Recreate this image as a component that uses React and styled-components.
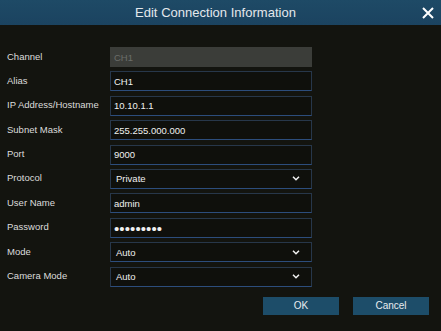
import React from "react";
import styled, { createGlobalStyle } from "styled-components";

const Global = createGlobalStyle`
  html, body { margin: 0; padding: 0; background: #13140f; }
  body { font-family: "Liberation Sans", Arial, sans-serif; }
  * { box-sizing: border-box; }
`;

const Dialog = styled.div`
  width: 441px;
  height: 331px;
  background: #13140f;
  display: flex;
  flex-direction: column;
  overflow: hidden;
`;

const Header = styled.div`
  height: 25px;
  flex: none;
  background: linear-gradient(#1e4a66, #1b4360);
  display: flex;
  align-items: center;
  justify-content: center;
  position: relative;
  padding-right: 10px;
`;

const Title = styled.div`
  color: #e4e8ec;
  font-size: 13px;
  letter-spacing: 0.02px;
`;

const Close = styled.button`
  position: absolute;
  right: 6px;
  top: 6px;
  width: 14px;
  height: 14px;
  padding: 0;
  border: 0;
  background: none;
  display: flex;
  align-items: center;
  justify-content: center;
`;

const Body = styled.div`
  padding: 22px 12px 0 7px;
  display: flex;
  flex-direction: column;
`;

const Form = styled.div`
  display: grid;
  grid-template-columns: 103px 202px;
  row-gap: 4.4px;
`;

const Label = styled.div`
  color: #dcdcdc;
  font-size: 9.5px;
  height: 20px;
  display: flex;
  align-items: center;
  padding-bottom: 2px;
`;

const Field = styled.div`
  height: 20px;
  display: flex;
  align-items: center;
  justify-content: space-between;
  padding: ${(p) => (p.$select ? "0 11px 0 5px" : "0 3px")};
  font-size: 9.5px;
  color: ${(p) => (p.$disabled ? "#6b6d69" : "#f0f0f0")};
  background: ${(p) => (p.$disabled ? "#3b3d39" : "#0f100c")};
  border: 1px solid ${(p) => (p.$disabled ? "#3b3d39" : "#27374a")};
  border-bottom-color: ${(p) => (p.$disabled ? "#3b3d39" : "#2c4d7c")};
`;

const Dots = styled.span`
  font-size: 15px;
  letter-spacing: 0.1px;
  line-height: 1;
  margin-top: 1px;
`;

const Buttons = styled.div`
  display: flex;
  justify-content: flex-end;
  gap: 14px;
  margin-top: 10px;
`;

const Button = styled.button`
  width: 76px;
  height: 18px;
  border: 0;
  padding: 0;
  background: #1d4d69;
  color: #e8ecef;
  font-family: "Liberation Sans", Arial, sans-serif;
  font-size: 10px;
`;

const Chevron = () => (
  <svg width="8" height="5" viewBox="0 0 8 5">
    <path d="M1 0.8 L4 3.8 L7 0.8" fill="none" stroke="#f2f2f2" strokeWidth="1.5" />
  </svg>
);

const rows = [
  { label: "Channel", value: "CH1", disabled: true },
  { label: "Alias", value: "CH1" },
  { label: "IP Address/Hostname", value: "10.10.1.1" },
  { label: "Subnet Mask", value: "255.255.000.000" },
  { label: "Port", value: "9000" },
  { label: "Protocol", value: "Private", select: true },
  { label: "User Name", value: "admin" },
  { label: "Password", value: "•••••••••", password: true },
  { label: "Mode", value: "Auto", select: true },
  { label: "Camera Mode", value: "Auto", select: true },
];

export default function App() {
  return (
    <>
      <Global />
      <Dialog>
        <Header>
          <Title>Edit Connection Information</Title>
          <Close aria-label="close">
            <svg width="12" height="12" viewBox="0 0 12 12">
              <path d="M1 1 L11 11 M11 1 L1 11" stroke="#ffffff" strokeWidth="2" />
            </svg>
          </Close>
        </Header>
        <Body>
          <Form>
            {rows.map((r) => (
              <React.Fragment key={r.label}>
                <Label>{r.label}</Label>
                <Field $disabled={r.disabled} $select={r.select}>
                  {r.password ? <Dots>{r.value}</Dots> : <span>{r.value}</span>}
                  {r.select && <Chevron />}
                </Field>
              </React.Fragment>
            ))}
          </Form>
          <Buttons>
            <Button>OK</Button>
            <Button>Cancel</Button>
          </Buttons>
        </Body>
      </Dialog>
    </>
  );
}
